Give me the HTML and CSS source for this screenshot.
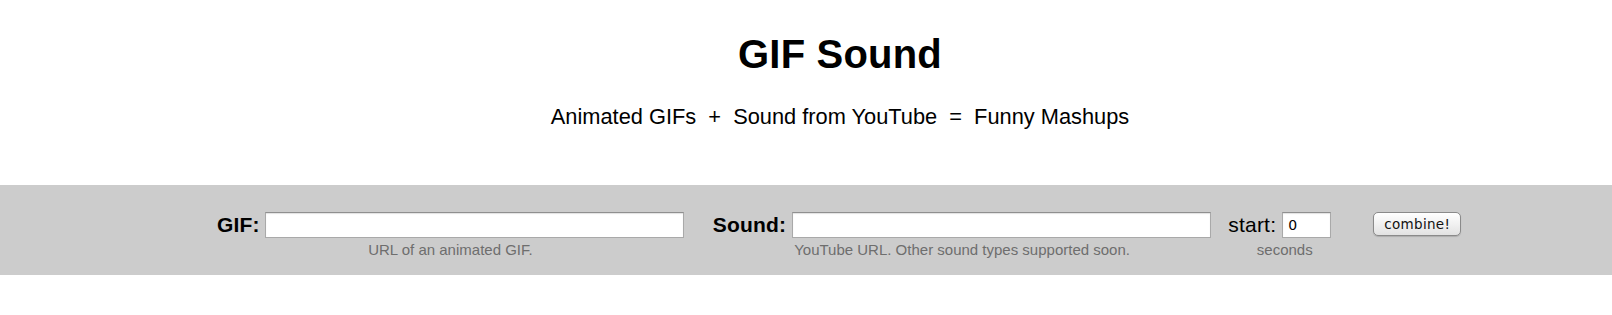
FILE: index.html
```html
<!DOCTYPE html>
<html>
<head>
<meta charset="utf-8">
<title>GIF Sound</title>
<link rel="stylesheet" href="styles.css">
</head>
<body>
<header class="masthead">
  <h1 class="title">GIF Sound</h1>
  <p class="tagline">Animated GIFs&nbsp; +&nbsp; Sound from YouTube&nbsp; =&nbsp; Funny Mashups</p>
</header>
<form class="band">
  <div class="row">
    <div class="group group-gif">
      <div class="line">
        <label class="label bold">GIF:</label>
        <input class="field field-gif" type="text">
      </div>
      <div class="hint">URL of an animated GIF.</div>
    </div>
    <div class="group group-sound">
      <div class="line">
        <label class="label bold">Sound:</label>
        <input class="field field-sound" type="text">
      </div>
      <div class="hint">YouTube URL. Other sound types supported soon.</div>
    </div>
    <div class="group group-start">
      <div class="line">
        <label class="label">start:</label>
        <input class="field field-start" type="text" value="0">
      </div>
      <div class="hint hint-start">seconds</div>
    </div>
    <div class="group group-btn">
      <button class="btn" type="button">combine!</button>
    </div>
  </div>
</form>
</body>
</html>
```
FILE: styles.css
```css
html, body {
  margin: 0;
  padding: 0;
  background: #ffffff;
  font-family: "Liberation Sans", Arial, Helvetica, sans-serif;
  color: #000;
}

.masthead {
  padding-left: 68px;
  text-align: center;
  padding-top: 31px;
  height: 155px;
  box-sizing: border-box;
}

.title {
  margin: 0;
  font-size: 40px;
  font-weight: bold;
  line-height: 46px;
  letter-spacing: 0.2px;
}

.tagline {
  margin: 27px 0 0 0;
  font-size: 21.8px;
  line-height: 26px;
}

.band {
  margin: 30px 0 0 0;
  background: #cccccc;
  height: 90px;
  box-sizing: border-box;
  padding-top: 27px;
}

.row {
  display: flex;
  align-items: flex-start;
  padding-left: 217px;
}

.group {
  display: flex;
  flex-direction: column;
  align-items: center;
}

.line {
  display: flex;
  align-items: center;
  height: 26px;
}

.label {
  font-size: 21px;
  line-height: 26px;
  letter-spacing: 0.2px;
}

.bold {
  font-weight: bold;
}

.field {
  box-sizing: border-box;
  height: 26px;
  border: 1px solid #a9a9a9;
  border-top-color: #8f8f8f;
  box-shadow: inset 0 1px 1px rgba(0,0,0,0.12);
  background: #fff;
  padding: 2px 5px;
  font-family: "DejaVu Sans", "Liberation Sans", sans-serif;
  font-size: 14px;
  color: #000;
  margin: 0;
}

.field-gif {
  width: 419px;
  margin-left: 5px;
}

.field-sound {
  width: 419px;
  margin-left: 6px;
}

.field-start {
  width: 49px;
  margin-left: 6px;
}

.group-sound {
  margin-left: 29px;
}

.group-start {
  margin-left: 17px;
}

.group-btn {
  margin-left: 42px;
}

.hint {
  margin-top: 4px;
  font-size: 15px;
  line-height: 16px;
  color: #6e6e6e;
}

.hint-start {
  margin-left: 10px;
}

.btn {
  box-sizing: border-box;
  width: 88px;
  height: 24px;
  margin: 0;
  padding: 0;
  border: 1px solid #8a8a8a;
  border-radius: 5px;
  background: linear-gradient(#ffffff, #f1f1f1 50%, #e2e2e2);
  box-shadow: 0 1px 1px rgba(0,0,0,0.15);
  font-family: "DejaVu Sans", "Liberation Sans", sans-serif;
  font-size: 13.5px;
  color: #111;
  letter-spacing: 0.3px;
}
```
